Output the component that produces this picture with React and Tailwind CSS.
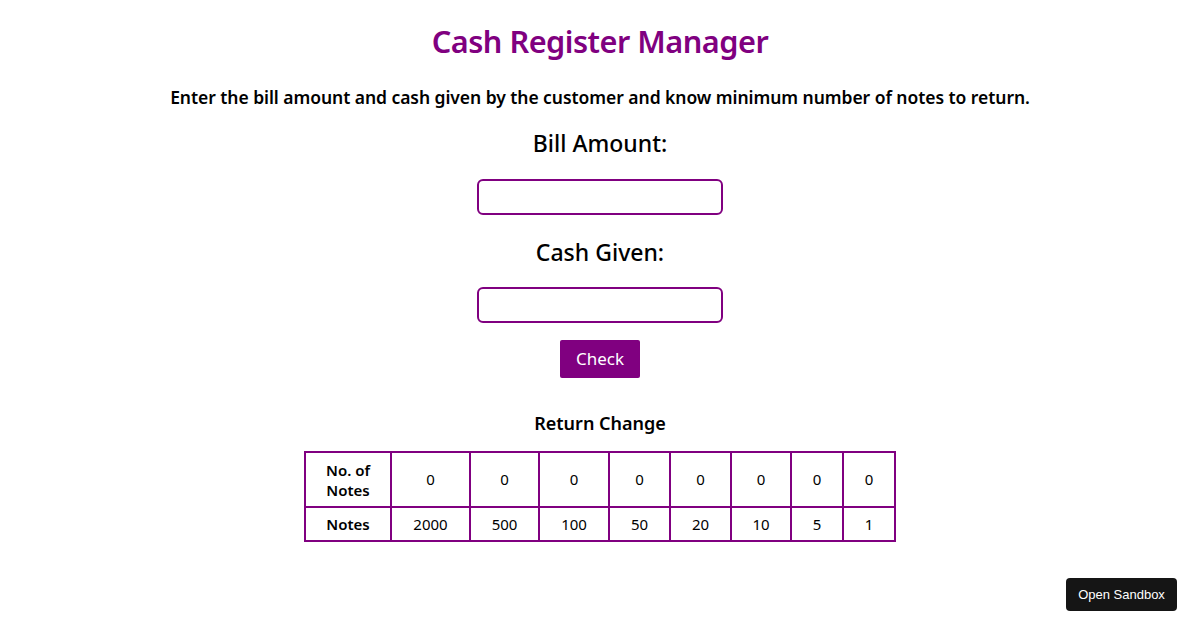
const counts = [0, 0, 0, 0, 0, 0, 0, 0]
const notes = [2000, 500, 100, 50, 20, 10, 5, 1]
const widths = ['w-[79px]', 'w-[69px]', 'w-[70px]', 'w-[61px]', 'w-[61px]', 'w-[60px]', 'w-[52px]', 'w-[52px]']

const cell = 'border-2 border-[#800080] text-center text-[15px] text-black'

export default function App() {
  return (
    <div className="relative w-[1200px] h-[630px] bg-white font-['Noto_Sans',sans-serif] overflow-hidden">
      <div className="flex flex-col items-center">
        <h1 className="mt-[23px] text-[30.7px] leading-[37px] font-semibold text-[#800080] tracking-[-0.5px]">
          Cash Register Manager
        </h1>
        <p className="mt-[26px] text-[17.5px] leading-[22px] font-semibold text-black tracking-[-0.05px]">
          Enter the bill amount and cash given by the customer and know minimum number of notes to return.
        </p>
        <h2 className="mt-[21px] text-[23px] leading-[28px] font-medium text-black">Bill Amount:</h2>
        <input
          type="text"
          className="mt-[22px] w-[246px] h-[36px] border-2 border-[#800080] rounded-[6px] outline-none px-2"
        />
        <h2 className="mt-[23px] text-[23px] leading-[28px] font-medium text-black">Cash Given:</h2>
        <input
          type="text"
          className="mt-[21px] w-[246px] h-[36px] border-2 border-[#800080] rounded-[6px] outline-none px-2"
        />
        <button className="mt-[17px] w-[80px] h-[38px] bg-[#800080] text-white text-[17px] rounded-[2px]">
          Check
        </button>
        <h3 className="mt-[34px] text-[18px] leading-[22px] font-semibold text-black">Return Change</h3>
        <table className="mt-[17px] border-collapse table-fixed">
          <tbody>
            <tr className="h-[55px]">
              <th className={`${cell} w-[86px] font-semibold leading-[20px]`}>
                No. of
                <br />
                Notes
              </th>
              {counts.map((c, i) => (
                <td key={i} className={`${cell} ${widths[i]}`}>
                  {c}
                </td>
              ))}
            </tr>
            <tr className="h-[34px]">
              <th className={`${cell} font-semibold`}>Notes</th>
              {notes.map((n) => (
                <td key={n} className={cell}>
                  {n}
                </td>
              ))}
            </tr>
          </tbody>
        </table>
      </div>
      <button className="absolute right-[23px] bottom-[19px] w-[111px] h-[33px] bg-[#151515] rounded-[4px] text-white text-[13px] font-['Liberation_Sans',sans-serif]">
        Open Sandbox
      </button>
    </div>
  )
}
